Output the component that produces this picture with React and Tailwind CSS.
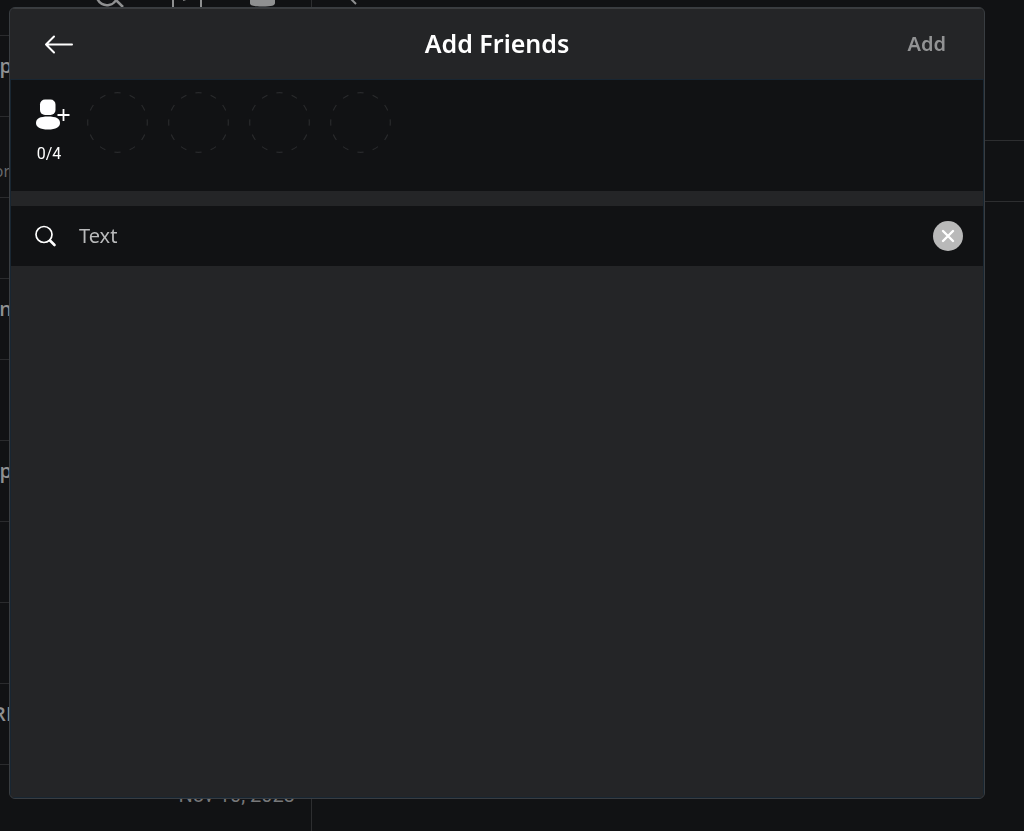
import React, { useState } from "react";

const rows = [
  { title: "p" },
  { detail: "or" },
  {},
  { title: "n" },
  {},
  { title: "p" },
  {},
  {},
  { title: "RI" },
  { date: "Nov 10, 2023" },
];

const SLOTS = 4;

function TopNav() {
  return (
    <div className="flex h-9 items-start border-b border-[#2a2b2d] pl-24 text-[#8f9091]">
      <svg className="h-2 w-8" viewBox="0 0 32 8" fill="none" stroke="currentColor" strokeWidth="2.5">
        <path d="M1 -2C3 3.500 8 6 13 5C17 4.500 20 1 21 -2M20 0L27 7" />
      </svg>
      <svg className="ml-11 h-2 w-8" viewBox="0 0 32 8" fill="none" stroke="currentColor" strokeWidth="2">
        <path d="M1 8V0M29 8V0M11 0L14 -1" />
      </svg>
      <svg className="ml-11 h-2 w-8" viewBox="0 0 32 8" fill="currentColor">
        <path d="M2 0H27V3C27 5.500 24 6.500 14 6.500C5 6.500 2 5.500 2 3Z" />
      </svg>
    </div>
  );
}

function Sidebar() {
  return (
    <aside className="w-[312px] shrink-0 overflow-hidden border-r border-[#2d2e30] font-['Open_Sans',sans-serif]">
      <TopNav />
      {rows.map((row, i) => (
        <div key={i} className="flex h-[81px] justify-between border-b border-[#2a2b2d] pt-[18px] pr-4 last:border-b-0">
          <div className="flex w-3 flex-col items-end whitespace-nowrap">
            <span className="h-6 text-xl leading-6 font-semibold text-[#8f9091]">{row.title}</span>
            <span className="pr-0.5 text-base leading-6 text-[#6b6c6e]">{row.detail}</span>
          </div>
          {row.date && <span className="font-['Roboto',sans-serif] text-xl leading-6 text-[#77787a]">{row.date}</span>}
        </div>
      ))}
    </aside>
  );
}

function Conversation() {
  return (
    <main className="flex-1">
      <div className="h-[141px] border-b border-[#2d2e30] pl-9 text-[#8f9091]">
        <svg className="h-2 w-3" viewBox="0 0 12 8" fill="none" stroke="currentColor" strokeWidth="2">
          <path d="M0 -4L8 4" />
        </svg>
      </div>
      <div className="h-[61px] border-b border-[#2d2e30]" />
    </main>
  );
}

function AddFriends() {
  const [query, setQuery] = useState("");

  return (
    <section
      role="dialog"
      aria-labelledby="add-friends-title"
      className="flex flex-1 flex-col overflow-hidden rounded-md border border-[#393d41] bg-[#242527]"
    >
      <header className="grid h-[72px] shrink-0 grid-cols-3 items-center border-t border-b border-t-[#3b3c3e] border-b-[#182632] px-[34px]">
        <button type="button" aria-label="Back" className="justify-self-start text-white">
          <svg className="h-6 w-8" viewBox="0 0 32 24" fill="none" stroke="currentColor" strokeWidth="2" strokeLinecap="round" strokeLinejoin="round">
            <path d="M28 12.500H2M10 4.500L2 12.500L10 20.500" />
          </svg>
        </button>
        <h1 id="add-friends-title" className="text-center text-[25px] font-semibold whitespace-nowrap text-white">
          Add Friends
        </h1>
        <button type="button" className="justify-self-end px-1 text-xl font-semibold text-[#929394]">
          Add
        </button>
      </header>

      <div className="flex flex-1 flex-col border-x border-b border-[#182632]">
        <div className="flex h-[111px] items-start bg-[#111214] pt-3 pl-6">
          <div className="flex w-[52px] flex-col pt-1 text-white">
            <svg className="h-9 w-9" viewBox="0 0 36 36" fill="currentColor">
              <rect x="5" y="3.500" width="15.500" height="15.500" rx="5" />
              <path d="M1 27C1 22.500 5 20.500 13 20.500C21 20.500 25 22.500 25 27C25 31 21 33.500 13 33.500C5 33.500 1 31 1 27Z" />
              <path d="M28.500 13V25M22.500 19H34.500" stroke="currentColor" strokeWidth="1.800" />
            </svg>
            <span className="w-7 pt-2.5 text-center font-['Roboto',sans-serif] text-base leading-6">0/{SLOTS}</span>
          </div>
          <div className="flex gap-5">
            {Array.from({ length: SLOTS }, (_, i) => (
              <svg key={i} className="h-[61px] w-[61px]" viewBox="0 0 61 61" fill="none">
                <circle cx="30.500" cy="30.500" r="29.800" stroke="#292a2c" strokeWidth="1.200" pathLength="120" strokeDasharray="4 6" strokeDashoffset="2" />
              </svg>
            ))}
          </div>
        </div>

        <div className="mt-[15px] flex h-[60px] items-center bg-[#111214] pr-5 pl-6">
          <label htmlFor="friend-search" aria-label="Search friends" className="text-white">
            <svg className="h-6 w-6" viewBox="0 0 24 24" fill="none" stroke="currentColor" strokeLinecap="round">
              <circle cx="9" cy="10.500" r="8" strokeWidth="1.700" />
              <path d="M15 16.500L19.500 21" strokeWidth="2.600" />
            </svg>
          </label>
          <input
            id="friend-search"
            type="text"
            placeholder="Text"
            value={query}
            onChange={(e) => setQuery(e.target.value)}
            className="mx-5 min-w-0 flex-1 bg-transparent text-xl text-white outline-none placeholder:text-[#b9babb]"
          />
          <button
            type="button"
            aria-label="Clear"
            onClick={() => setQuery("")}
            className="flex h-[30px] w-[30px] items-center justify-center rounded-full bg-[#b9b9b9] text-white"
          >
            <svg className="h-3.5 w-3.5" viewBox="0 0 14 14" fill="none" stroke="currentColor" strokeWidth="2.400" strokeLinecap="round">
              <path d="M2 2L12 12M12 2L2 12" />
            </svg>
          </button>
        </div>
      </div>
    </section>
  );
}

export default function App() {
  return (
    <div className="flex h-screen overflow-hidden bg-[#111214] font-['Noto_Sans',sans-serif]">
      <Sidebar />
      <Conversation />
      <div className="fixed inset-0 flex pt-[7px] pr-[39px] pb-8 pl-[9px]">
        <AddFriends />
      </div>
    </div>
  );
}
